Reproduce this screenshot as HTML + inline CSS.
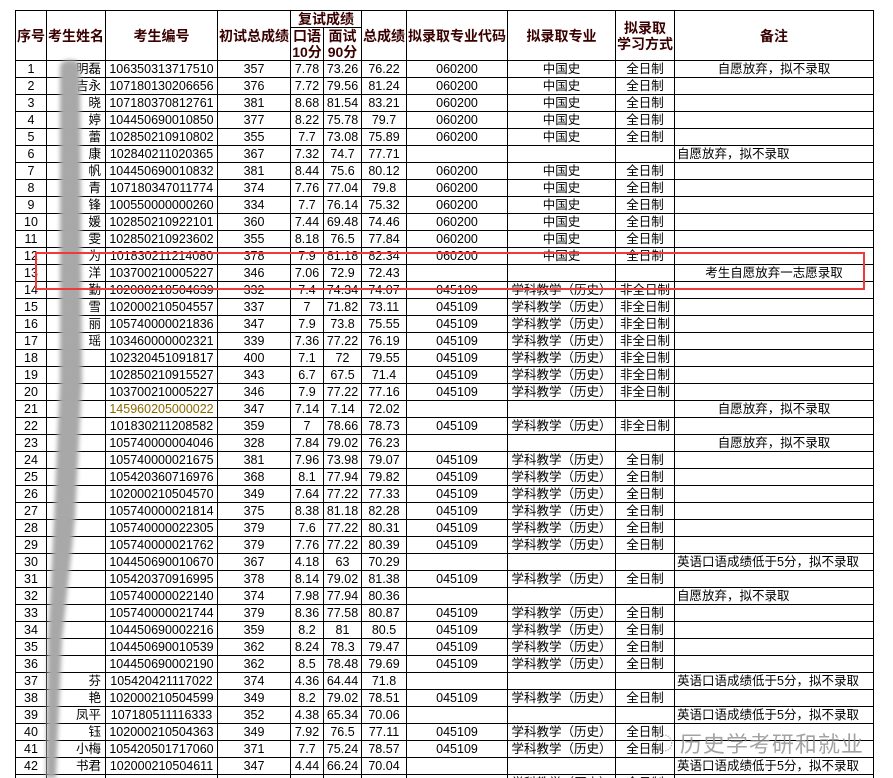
<!DOCTYPE html>
<html><head><meta charset="utf-8">
<style>
html,body{margin:0;padding:0;background:#fff;width:893px;height:778px;overflow:hidden;position:relative}
table{position:absolute;left:15px;top:10px;border-collapse:collapse;table-layout:fixed;font-family:"Liberation Sans","Noto Sans CJK SC",sans-serif;font-size:12.5px;color:#000}
td,th{border:1px solid #000;padding:0;height:16px;line-height:16px;text-align:center;white-space:nowrap;overflow:hidden}
th{font-weight:bold;color:#3a0000;font-size:14px;line-height:16px}
td.l{text-align:left;padding-left:2px}
td.n{text-align:right;padding-right:4px}
.box{position:absolute;left:35px;top:252px;width:826px;height:34px;border:2px solid #f03a3a}
.wm{position:absolute;left:655px;top:727px;font-family:"Noto Sans CJK SC",sans-serif;font-size:22px;color:rgba(140,140,140,.8);letter-spacing:1px}
</style></head><body>
<table>
<colgroup><col style="width:31px"><col style="width:59px"><col style="width:112px"><col style="width:73px"><col style="width:33px"><col style="width:38px"><col style="width:45px"><col style="width:101px"><col style="width:108px"><col style="width:59px"><col style="width:199px"></colgroup>
<tr><th rowspan="2" style="height:49px">序号</th><th rowspan="2">考生姓名</th><th rowspan="2">考生编号</th><th rowspan="2">初试总成绩</th><th colspan="2" style="height:16px">复试成绩</th><th rowspan="2">总成绩</th><th rowspan="2">拟录取专业代码</th><th rowspan="2">拟录取专业</th><th rowspan="2">拟录取<br>学习方式</th><th rowspan="2">备注</th></tr>
<tr><th style="height:32px">口语<br>10分</th><th>面试<br>90分</th></tr>
<tr><td>1</td><td class="n">明磊</td><td>106350313717510</td><td>357</td><td>7.78</td><td>73.26</td><td>76.22</td><td>060200</td><td>中国史</td><td>全日制</td><td>自愿放弃，拟不录取</td></tr>
<tr><td>2</td><td class="n">吉永</td><td>107180130206656</td><td>376</td><td>7.72</td><td>79.56</td><td>81.24</td><td>060200</td><td>中国史</td><td>全日制</td><td></td></tr>
<tr><td>3</td><td class="n">晓</td><td>107180370812761</td><td>381</td><td>8.68</td><td>81.54</td><td>83.21</td><td>060200</td><td>中国史</td><td>全日制</td><td></td></tr>
<tr><td>4</td><td class="n">婷</td><td>104450690010850</td><td>377</td><td>8.22</td><td>75.78</td><td>79.7</td><td>060200</td><td>中国史</td><td>全日制</td><td></td></tr>
<tr><td>5</td><td class="n">蕾</td><td>102850210910802</td><td>355</td><td>7.7</td><td>73.08</td><td>75.89</td><td>060200</td><td>中国史</td><td>全日制</td><td></td></tr>
<tr><td>6</td><td class="n">康</td><td>102840211020365</td><td>367</td><td>7.32</td><td>74.7</td><td>77.71</td><td></td><td></td><td></td><td class="l">自愿放弃，拟不录取</td></tr>
<tr><td>7</td><td class="n">帆</td><td>104450690010832</td><td>381</td><td>8.44</td><td>75.6</td><td>80.12</td><td>060200</td><td>中国史</td><td>全日制</td><td></td></tr>
<tr><td>8</td><td class="n">青</td><td>107180347011774</td><td>374</td><td>7.76</td><td>77.04</td><td>79.8</td><td>060200</td><td>中国史</td><td>全日制</td><td></td></tr>
<tr><td>9</td><td class="n">锋</td><td>100550000000260</td><td>334</td><td>7.7</td><td>76.14</td><td>75.32</td><td>060200</td><td>中国史</td><td>全日制</td><td></td></tr>
<tr><td>10</td><td class="n">媛</td><td>102850210922101</td><td>360</td><td>7.44</td><td>69.48</td><td>74.46</td><td>060200</td><td>中国史</td><td>全日制</td><td></td></tr>
<tr><td>11</td><td class="n">雯</td><td>102850210923602</td><td>355</td><td>8.18</td><td>76.5</td><td>77.84</td><td>060200</td><td>中国史</td><td>全日制</td><td></td></tr>
<tr><td>12</td><td class="n">为</td><td>101830211214080</td><td>378</td><td>7.9</td><td>81.18</td><td>82.34</td><td>060200</td><td>中国史</td><td>全日制</td><td></td></tr>
<tr><td>13</td><td class="n">洋</td><td>103700210005227</td><td>346</td><td>7.06</td><td>72.9</td><td>72.43</td><td></td><td></td><td></td><td>考生自愿放弃一志愿录取</td></tr>
<tr><td>14</td><td class="n">勤</td><td>102000210504639</td><td>332</td><td>7.4</td><td>74.34</td><td>74.07</td><td>045109</td><td>学科教学（历史）</td><td>非全日制</td><td></td></tr>
<tr><td>15</td><td class="n">雪</td><td>102000210504557</td><td>337</td><td>7</td><td>71.82</td><td>73.11</td><td>045109</td><td>学科教学（历史）</td><td>非全日制</td><td></td></tr>
<tr><td>16</td><td class="n">丽</td><td>105740000021836</td><td>347</td><td>7.9</td><td>73.8</td><td>75.55</td><td>045109</td><td>学科教学（历史）</td><td>非全日制</td><td></td></tr>
<tr><td>17</td><td class="n">瑶</td><td>103460000002321</td><td>339</td><td>7.36</td><td>77.22</td><td>76.19</td><td>045109</td><td>学科教学（历史）</td><td>非全日制</td><td></td></tr>
<tr><td>18</td><td class="n"></td><td>102320451091817</td><td>400</td><td>7.1</td><td>72</td><td>79.55</td><td>045109</td><td>学科教学（历史）</td><td>非全日制</td><td></td></tr>
<tr><td>19</td><td class="n"></td><td>102850210915527</td><td>343</td><td>6.7</td><td>67.5</td><td>71.4</td><td>045109</td><td>学科教学（历史）</td><td>非全日制</td><td></td></tr>
<tr><td>20</td><td class="n"></td><td>103700210005227</td><td>346</td><td>7.9</td><td>77.22</td><td>77.16</td><td>045109</td><td>学科教学（历史）</td><td>非全日制</td><td></td></tr>
<tr><td>21</td><td class="n"></td><td style="color:#8a6a00">145960205000022</td><td>347</td><td>7.14</td><td>7.14</td><td>72.02</td><td></td><td></td><td></td><td>自愿放弃，拟不录取</td></tr>
<tr><td>22</td><td class="n"></td><td>101830211208582</td><td>359</td><td>7</td><td>78.66</td><td>78.73</td><td>045109</td><td>学科教学（历史）</td><td>非全日制</td><td></td></tr>
<tr><td>23</td><td class="n"></td><td>105740000004046</td><td>328</td><td>7.84</td><td>79.02</td><td>76.23</td><td></td><td></td><td></td><td>自愿放弃，拟不录取</td></tr>
<tr><td>24</td><td class="n"></td><td>105740000021675</td><td>381</td><td>7.96</td><td>73.98</td><td>79.07</td><td>045109</td><td>学科教学（历史）</td><td>全日制</td><td></td></tr>
<tr><td>25</td><td class="n"></td><td>105420360716976</td><td>368</td><td>8.1</td><td>77.94</td><td>79.82</td><td>045109</td><td>学科教学（历史）</td><td>全日制</td><td></td></tr>
<tr><td>26</td><td class="n"></td><td>102000210504570</td><td>349</td><td>7.64</td><td>77.22</td><td>77.33</td><td>045109</td><td>学科教学（历史）</td><td>全日制</td><td></td></tr>
<tr><td>27</td><td class="n"></td><td>105740000021814</td><td>375</td><td>8.38</td><td>81.18</td><td>82.28</td><td>045109</td><td>学科教学（历史）</td><td>全日制</td><td></td></tr>
<tr><td>28</td><td class="n"></td><td>105740000022305</td><td>379</td><td>7.6</td><td>77.22</td><td>80.31</td><td>045109</td><td>学科教学（历史）</td><td>全日制</td><td></td></tr>
<tr><td>29</td><td class="n"></td><td>105740000021762</td><td>379</td><td>7.76</td><td>77.22</td><td>80.39</td><td>045109</td><td>学科教学（历史）</td><td>全日制</td><td></td></tr>
<tr><td>30</td><td class="n"></td><td>104450690010670</td><td>367</td><td>4.18</td><td>63</td><td>70.29</td><td></td><td></td><td></td><td class="l">英语口语成绩低于5分，拟不录取</td></tr>
<tr><td>31</td><td class="n"></td><td>105420370916995</td><td>378</td><td>8.14</td><td>79.02</td><td>81.38</td><td>045109</td><td>学科教学（历史）</td><td>全日制</td><td></td></tr>
<tr><td>32</td><td class="n"></td><td>105740000022140</td><td>374</td><td>7.98</td><td>77.94</td><td>80.36</td><td></td><td></td><td></td><td class="l">自愿放弃，拟不录取</td></tr>
<tr><td>33</td><td class="n"></td><td>105740000021744</td><td>379</td><td>8.36</td><td>77.58</td><td>80.87</td><td>045109</td><td>学科教学（历史）</td><td>全日制</td><td></td></tr>
<tr><td>34</td><td class="n"></td><td>104450690002216</td><td>359</td><td>8.2</td><td>81</td><td>80.5</td><td>045109</td><td>学科教学（历史）</td><td>全日制</td><td></td></tr>
<tr><td>35</td><td class="n"></td><td>104450690010539</td><td>362</td><td>8.24</td><td>78.3</td><td>79.47</td><td>045109</td><td>学科教学（历史）</td><td>全日制</td><td></td></tr>
<tr><td>36</td><td class="n"></td><td>104450690002190</td><td>362</td><td>8.5</td><td>78.48</td><td>79.69</td><td>045109</td><td>学科教学（历史）</td><td>全日制</td><td></td></tr>
<tr><td>37</td><td class="n">芬</td><td>105420421117022</td><td>374</td><td>4.36</td><td>64.44</td><td>71.8</td><td></td><td></td><td></td><td class="l">英语口语成绩低于5分，拟不录取</td></tr>
<tr><td>38</td><td class="n">艳</td><td>102000210504599</td><td>349</td><td>8.2</td><td>79.02</td><td>78.51</td><td>045109</td><td>学科教学（历史）</td><td>全日制</td><td></td></tr>
<tr><td>39</td><td class="n">凤平</td><td>107180511116333</td><td>352</td><td>4.38</td><td>65.34</td><td>70.06</td><td></td><td></td><td></td><td class="l">英语口语成绩低于5分，拟不录取</td></tr>
<tr><td>40</td><td class="n">钰</td><td>102000210504363</td><td>349</td><td>7.92</td><td>76.5</td><td>77.11</td><td>045109</td><td>学科教学（历史）</td><td>全日制</td><td></td></tr>
<tr><td>41</td><td class="n">小梅</td><td>105420501717060</td><td>371</td><td>7.7</td><td>75.24</td><td>78.57</td><td>045109</td><td>学科教学（历史）</td><td>全日制</td><td></td></tr>
<tr><td>42</td><td class="n">书君</td><td>102000210504611</td><td>347</td><td>4.44</td><td>66.24</td><td>70.04</td><td></td><td></td><td></td><td class="l">英语口语成绩低于5分，拟不录取</td></tr>
<tr><td>43</td><td class="n"></td><td></td><td></td><td></td><td></td><td></td><td></td><td>学科教学（历史）</td><td>全日制</td><td></td></tr>
</table>
<svg style="position:absolute;left:0;top:0" width="893" height="778">
<defs><filter id="b"><feGaussianBlur stdDeviation="2"/></filter></defs>
<path d="M60 68 Q60 60 70 60 Q80 60 80 68 L82 380 L75 520 L62 640 L56 778 L46 778 L48 640 L54 520 L60 380 Z" fill="#a8a8a8" filter="url(#b)"/>
</svg>
<div class="box"></div>
<div class="wm"><span style="font-size:18px;vertical-align:2px">◌</span> 历史学考研和就业</div>
</body></html>
